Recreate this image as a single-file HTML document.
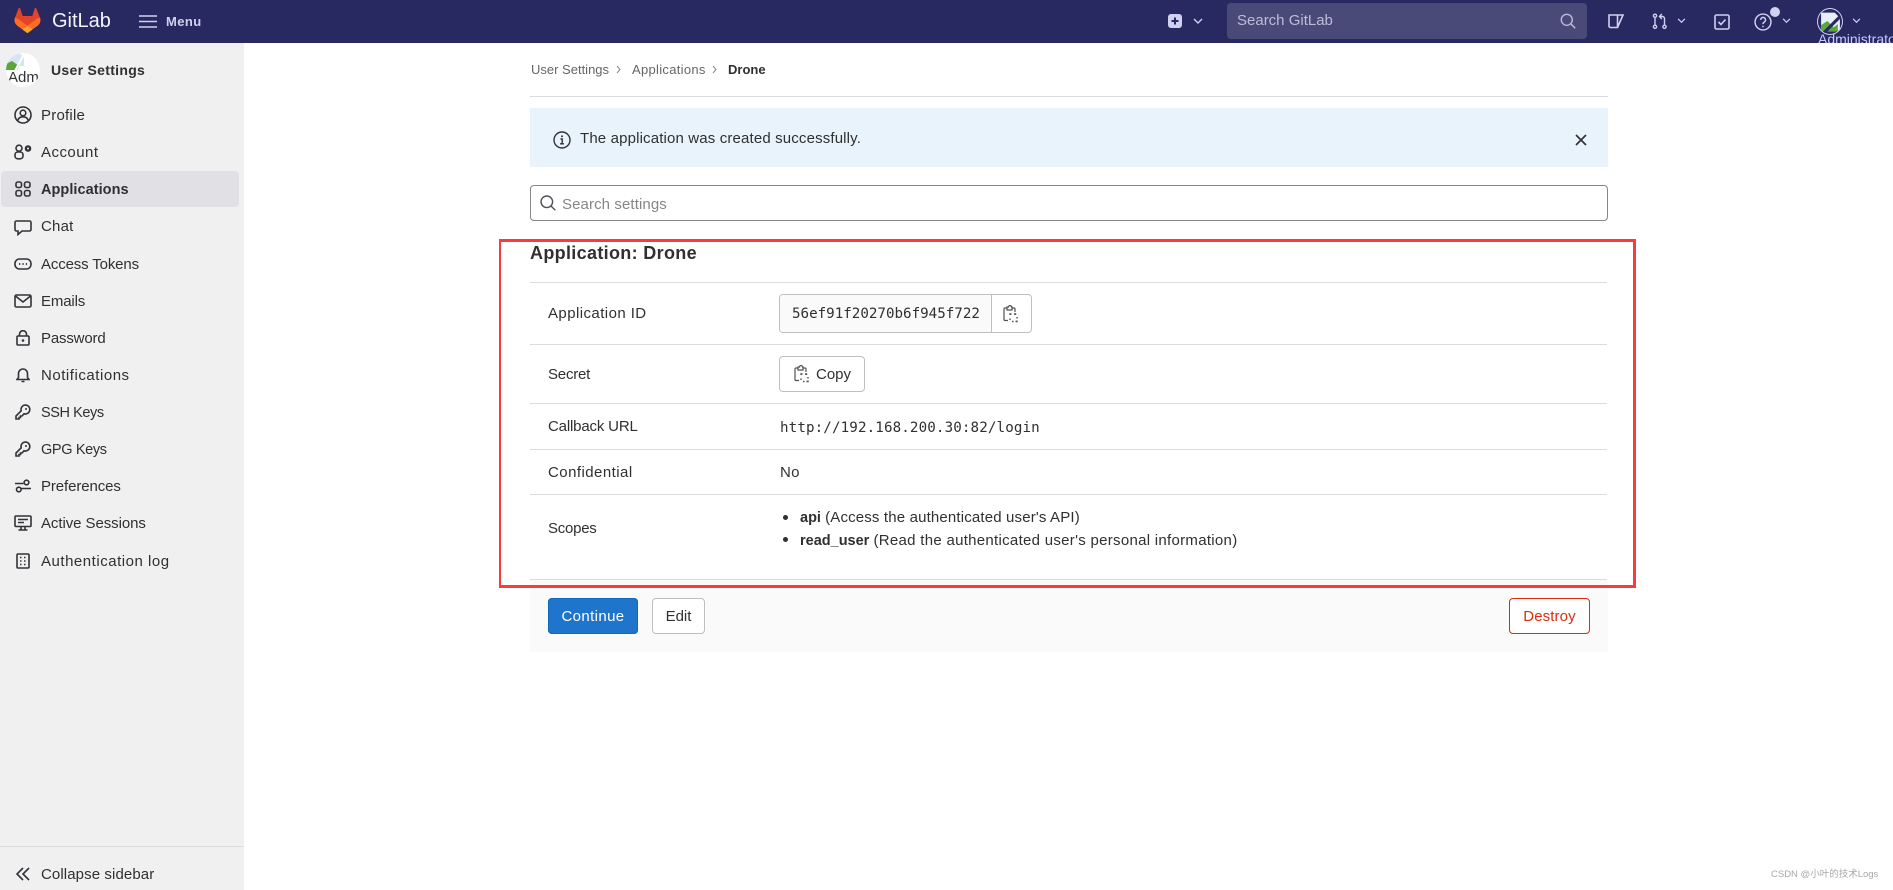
<!DOCTYPE html>
<html><head><meta charset="utf-8"><title>Drone</title>
<style>
html,body{margin:0;padding:0;width:1893px;height:890px;overflow:hidden;background:#fff}
body{font-family:"Liberation Sans","Noto Sans CJK SC",sans-serif;font-size:15px;color:#303030;position:relative}
.a{position:absolute}
.t{position:absolute;line-height:20px;white-space:nowrap}
svg{position:absolute;display:block;fill:none;stroke:currentColor;stroke-width:1.4}
.hdr{left:0;top:0;width:1893px;height:43px;background:#292961;overflow:hidden;color:#d1d0f0}
.side{left:0;top:43px;width:244px;height:847px;background:#f0f0f0}
.line{position:absolute;left:530px;width:1077px;height:1px;background:#dcdcde}
.m{font-family:"DejaVu Sans Mono","Liberation Mono",monospace;font-size:14.2px}
.ni{color:#333238;stroke-width:1.6}
.btn{position:absolute;box-sizing:border-box;border:1px solid #bfbfc3;border-radius:4px;background:#fff}
b{font-size:14.5px}
</style></head><body>

<div class="a hdr">
<svg style="left:14px;top:8px;stroke:none" width="27" height="25" viewBox="0 0 25 24"><path fill="#E24329" d="M24.507 9.5l-.034-.09L21.082.562a.896.896 0 00-1.694.091l-2.29 7.01H7.825L5.535.653a.898.898 0 00-1.694-.09L.451 9.411.416 9.5a6.297 6.297 0 002.09 7.278l.012.01.03.022 5.16 3.867 2.56 1.935 1.554 1.176a1.051 1.051 0 001.268 0l1.555-1.176 2.56-1.935 5.197-3.89.014-.01A6.297 6.297 0 0024.507 9.5z"/><path fill="#FC6D26" d="M24.507 9.5l-.034-.09a11.44 11.44 0 00-4.56 2.051l-7.447 5.632 4.742 3.584 5.197-3.89.014-.01A6.297 6.297 0 0024.507 9.5z"/><path fill="#FCA326" d="M7.707 20.677l2.56 1.935 1.555 1.176a1.051 1.051 0 001.268 0l1.555-1.176 2.56-1.935-4.743-3.584-4.755 3.584z"/><path fill="#FC6D26" d="M5.01 11.461a11.43 11.43 0 00-4.56-2.05L.416 9.5a6.297 6.297 0 002.09 7.278l.012.01.03.022 5.16 3.867 4.745-3.584-7.444-5.632z"/></svg>
<div class="t" style="left:52px;top:11px;font-size:20px;color:#f4f4ff">GitLab</div>
<svg style="left:139px;top:15px;stroke-width:1.5" width="18" height="13" viewBox="0 0 18 13"><path d="M0 1h18M0 6.500h18M0 12h18"/></svg>
<div class="t" style="left:166px;top:12px;font-size:13px;font-weight:700;letter-spacing:.4px;color:#d1d0f0">Menu</div>

<svg style="left:1168px;top:14px;stroke:none" width="14" height="14" viewBox="0 0 14 14"><rect width="14" height="14" rx="3" fill="#d1d0f0"/><path d="M6 3.500h2V6h2.500v2H8v2.500H6V8H3.500V6H6z" fill="#292961"/></svg>
<svg style="left:1193px;top:18px" width="10" height="7" viewBox="0 0 10 7"><path d="M1 1l4 4 4-4"/></svg>

<div class="a" style="left:1227px;top:3px;width:360px;height:36px;border-radius:4px;background:#4a4a78"></div>
<div class="t" style="left:1237px;top:11px;font-size:15px;color:#bcbcdc">Search GitLab</div>
<svg style="left:1560px;top:13px;color:#bcbcdc" width="16" height="16" viewBox="0 0 16 16"><circle cx="6.800" cy="6.800" r="5.500"/><path d="M11 11l4.200 4.200"/></svg>

<svg style="left:1608px;top:13px;stroke-width:1.6" width="16" height="16" viewBox="0 0 16 16"><path d="M1 2h8.500v12.500h-7A1.500 1.500 0 011 13zM9.500 2H15L9.500 14.500"/></svg>
<svg style="left:1652px;top:13px" width="16" height="17" viewBox="0 0 16 17"><circle cx="3" cy="2.800" r="1.600"/><circle cx="3" cy="13.800" r="1.600"/><circle cx="12.500" cy="13.800" r="1.600"/><path d="M3 5v6.500M12.500 11.500V5.500a2 2 0 00-2-2H8M9.800 1L7.500 3.500 9.800 6"/></svg>
<svg style="left:1677px;top:18px" width="9" height="6" viewBox="0 0 10 7"><path d="M1 1l4 4 4-4"/></svg>
<svg style="left:1714px;top:14px;stroke-width:1.6" width="16" height="16" viewBox="0 0 16 16"><rect x="1" y="1" width="14" height="14" rx="1.500"/><path d="M4.500 8l2.500 2.500 4.500-5"/></svg>
<svg style="left:1754px;top:13px" width="18" height="18" viewBox="0 0 17 17"><circle cx="8.500" cy="8.500" r="7.500"/><path d="M6.300 6.500a2.300 2.300 0 114 1.500c-.9.900-1.800 1.200-1.800 2.500M8.500 12v1.500"/></svg>
<div class="a" style="left:1770px;top:7px;width:10px;height:10px;border-radius:50%;background:#d1d0f0"></div>
<svg style="left:1782px;top:18px" width="9" height="6" viewBox="0 0 10 7"><path d="M1 1l4 4 4-4"/></svg>

<div class="a" style="left:1817px;top:8px;width:26px;height:27px;border-radius:50%;border:1px solid #d1d0f0;box-sizing:border-box;overflow:hidden;background:#292961">
<svg style="left:1px;top:1px;stroke:none" width="23" height="24" viewBox="0 0 22 22"><path d="M2 2h13l5 5v13H2z" fill="#e8eefc"/><path d="M2 20v-6l6-4 6 6 4-3v7z" fill="#59a83a"/><path d="M20 6L5 21" stroke="#292961" stroke-width="3"/></svg>
</div>
<svg style="left:1852px;top:18px" width="9" height="6" viewBox="0 0 10 7"><path d="M1 1l4 4 4-4"/></svg>
<div class="t" style="left:1818px;top:29px;font-size:14px;color:#c8c8ff">Administrator</div>
</div>

<div class="a side"></div>
<div class="a" style="left:6px;top:53px;width:34px;height:34px;border-radius:50%;background:#fff;overflow:hidden">
<svg style="left:0;top:0;stroke:none" width="20" height="18" viewBox="0 0 20 18"><path d="M0 6L13 0l5 4v9H0z" fill="#d6e4f5"/><path d="M0 17v-6l6-3 7 5-2 4z" fill="#5ba53c"/><path d="M17 3L9 18" stroke="#fff" stroke-width="2"/></svg>
<div class="t" style="left:2px;top:15px;font-size:15px;color:#333">Adm</div>
</div>
<div class="t" style="left:51px;top:60px;font-weight:700;font-size:14px;letter-spacing:.3px;color:#303030">User Settings</div>
<div class="a" style="left:1px;top:171px;width:238px;height:36px;background:#e1e1e5;border-radius:4px"></div>

<div class="t" style="left:41px;top:106px;letter-spacing:.23px">Profile</div>
<div class="t" style="left:41px;top:143px;letter-spacing:.47px">Account</div>
<div class="t" style="left:41px;top:180px;font-weight:700;font-size:14.5px;letter-spacing:.05px">Applications</div>
<div class="t" style="left:41px;top:217px;letter-spacing:.2px">Chat</div>
<div class="t" style="left:41px;top:255px;letter-spacing:-.14px">Access Tokens</div>
<div class="t" style="left:41px;top:292px;letter-spacing:-.15px">Emails</div>
<div class="t" style="left:41px;top:329px;letter-spacing:-.17px">Password</div>
<div class="t" style="left:41px;top:366px;letter-spacing:.53px">Notifications</div>
<div class="t" style="left:41px;top:403px;font-size:14.5px;letter-spacing:-.42px">SSH Keys</div>
<div class="t" style="left:41px;top:440px;font-size:14.5px;letter-spacing:-.35px">GPG Keys</div>
<div class="t" style="left:41px;top:477px;letter-spacing:-.1px">Preferences</div>
<div class="t" style="left:41px;top:514px;letter-spacing:-.07px">Active Sessions</div>
<div class="t" style="left:41px;top:552px;letter-spacing:.52px">Authentication log</div>

<svg class="ni" style="left:14px;top:106px" width="18" height="18" viewBox="0 0 18 18"><circle cx="9" cy="9" r="8"/><circle cx="9" cy="7" r="2.800"/><path d="M3.800 14.500c.6-2.600 2.600-3.700 5.200-3.700s4.600 1.100 5.200 3.700"/></svg>
<svg class="ni" style="left:14px;top:144px" width="18" height="16" viewBox="0 0 18 16"><circle cx="5" cy="4.200" r="3"/><rect x="1" y="8" width="8" height="6.800" rx="2.800"/><circle cx="14" cy="4.500" r="3.300" fill="#333238" stroke="none"/><circle cx="14" cy="4.500" r="1" fill="#f0f0f0" stroke="none"/></svg>
<svg class="ni" style="left:15px;top:181px" width="16" height="16" viewBox="0 0 16 16"><rect x="1" y="1" width="5.500" height="5.500" rx="1.800"/><rect x="9.500" y="1" width="5.500" height="5.500" rx="1.800"/><rect x="1" y="9.500" width="5.500" height="5.500" rx="1.800"/><rect x="9.500" y="9.500" width="5.500" height="5.500" rx="1.800"/></svg>
<svg class="ni" style="left:14px;top:220px" width="18" height="16" viewBox="0 0 18 16"><path d="M2.500 1h13A1.500 1.500 0 0117 2.500v7a1.500 1.500 0 01-1.500 1.500H8L4 14.500V11H2.500A1.500 1.500 0 011 9.500v-7A1.500 1.500 0 012.500 1z"/></svg>
<svg class="ni" style="left:14px;top:258px" width="18" height="12" viewBox="0 0 18 12"><rect x="1" y="1" width="16" height="10" rx="4.500"/><path d="M5 6h1.300M8.400 6h1.300M11.800 6h1.300" stroke-width="1.800"/></svg>
<svg class="ni" style="left:14px;top:294px" width="18" height="14" viewBox="0 0 18 14"><rect x="1" y="1" width="16" height="12" rx="1.500"/><path d="M1.500 2l7.500 6 7.500-6"/></svg>
<svg class="ni" style="left:16px;top:330px" width="14" height="16" viewBox="0 0 14 16"><rect x="1" y="6" width="12" height="9" rx="1"/><path d="M3.500 6V4.200a3.500 3.500 0 017 0V6"/><circle cx="7" cy="10.500" r="1.300" fill="currentColor" stroke="none"/></svg>
<svg class="ni" style="left:16px;top:367px" width="14" height="16" viewBox="0 0 14 16"><path d="M1 12.500h12l-1.500-2V6.500a4.500 4.500 0 00-9 0v4zM5.500 14.500h3"/></svg>
<svg class="ni" style="left:15px;top:404px" width="16" height="16" viewBox="0 0 16 16"><path d="M10.500 1a4.500 4.500 0 11-1.500 8.800L7 12H5.500v1.500H4V15H1v-3l5.200-5.200A4.500 4.500 0 0110.500 1z"/><circle cx="11" cy="5" r="1" fill="currentColor" stroke="none"/></svg>
<svg class="ni" style="left:15px;top:441px" width="16" height="16" viewBox="0 0 16 16"><path d="M10.500 1a4.500 4.500 0 11-1.500 8.800L7 12H5.500v1.500H4V15H1v-3l5.200-5.200A4.500 4.500 0 0110.500 1z"/><circle cx="11" cy="5" r="1" fill="currentColor" stroke="none"/></svg>
<svg class="ni" style="left:15px;top:479px" width="16" height="14" viewBox="0 0 16 14"><circle cx="11.500" cy="3.500" r="2.300"/><circle cx="3.800" cy="10.500" r="2.300"/><path d="M0 4.500h8.500M6.500 9.500H16"/></svg>
<svg class="ni" style="left:14px;top:515px" width="18" height="16" viewBox="0 0 18 16"><rect x="1" y="1" width="16" height="10.500" rx="1"/><path d="M4 4.500h10M4 7.500h6M7 12v2.500M11 12v2.500M4.500 15h9"/></svg>
<svg class="ni" style="left:16px;top:553px" width="14" height="16" viewBox="0 0 14 16"><rect x="1" y="1" width="12" height="14" rx="1"/><path d="M4 4.500h1.500M8 4.500h1.500M4 8h1.500M8 8h1.500M4 11.500h1.500M8 11.500h1.500"/></svg>

<div class="a" style="left:0;top:846px;width:244px;height:1px;background:#dcdcde"></div>
<svg class="ni" style="left:16px;top:867px" width="14" height="14" viewBox="0 0 14 14"><path d="M7 1L1 7l6 6M13 1L7 7l6 6"/></svg>
<div class="t" style="left:41px;top:865px;letter-spacing:.1px">Collapse sidebar</div>

<div class="t" style="left:531px;top:60px;font-size:13px;color:#666">User Settings</div>
<svg style="left:616px;top:65px;color:#888;stroke-width:1" width="5" height="9" viewBox="0 0 5 9"><path d="M1 1l3 3.500L1 8"/></svg>
<div class="t" style="left:632px;top:60px;font-size:13px;letter-spacing:.3px;color:#666">Applications</div>
<svg style="left:712px;top:65px;color:#888;stroke-width:1" width="5" height="9" viewBox="0 0 5 9"><path d="M1 1l3 3.500L1 8"/></svg>
<div class="t" style="left:728px;top:60px;font-size:13px;font-weight:700;color:#303030">Drone</div>
<div class="a" style="left:530px;top:96px;width:1078px;height:1px;background:#dcdcde"></div>

<div class="a" style="left:530px;top:108px;width:1078px;height:59px;background:#e9f3fc"></div>
<svg style="left:553px;top:131px;color:#333238" width="18" height="18" viewBox="0 0 18 18"><circle cx="9" cy="9" r="8"/><path d="M7.500 8h1.700v4.500M7 12.800h4" /><circle cx="9" cy="5.300" r="1" fill="currentColor" stroke="none"/></svg>
<div class="t" style="left:580px;top:129px;font-size:15px;letter-spacing:.15px">The application was created successfully.</div>
<svg style="left:1575px;top:134px;color:#333238;stroke-width:1.700" width="12" height="12" viewBox="0 0 12 12"><path d="M1 1l10 10M11 1L1 11"/></svg>

<div class="a" style="left:530px;top:185px;width:1078px;height:36px;box-sizing:border-box;border:1px solid #868686;border-radius:4px;background:#fff"></div>
<svg style="left:540px;top:195px;color:#535158" width="16" height="16" viewBox="0 0 16 16"><circle cx="6.800" cy="6.800" r="5.800"/><path d="M11 11l4.300 4.300"/></svg>
<div class="t" style="left:562px;top:195px;font-size:15px;letter-spacing:.1px;color:#868686">Search settings</div>

<div class="t" style="left:530px;top:243px;font-size:18px;font-weight:700;letter-spacing:.33px;color:#303030">Application: Drone</div>

<div class="line" style="top:282px"></div>
<div class="line" style="top:344px"></div>
<div class="line" style="top:403px"></div>
<div class="line" style="top:449px"></div>
<div class="line" style="top:494px"></div>
<div class="line" style="top:579px"></div>

<div class="t" style="left:548px;top:304px;letter-spacing:.43px">Application ID</div>
<div class="t" style="left:548px;top:365px;letter-spacing:-.2px">Secret</div>
<div class="t" style="left:548px;top:417px;letter-spacing:-.17px">Callback URL</div>
<div class="t" style="left:548px;top:463px;letter-spacing:.45px">Confidential</div>
<div class="t" style="left:548px;top:519px;letter-spacing:-.25px">Scopes</div>

<div class="a" style="left:779px;top:294px;width:253px;height:39px;box-sizing:border-box;border:1px solid #bfbfc3;border-radius:4px;background:#fff;overflow:hidden"><div class="a" style="left:0;top:0;width:211px;height:37px;background:#fafafa;border-right:1px solid #bfbfc3"></div></div>
<div class="t m" style="left:792px;top:304px;width:189px;overflow:hidden">56ef91f20270b6f945f722</div>
<svg style="left:1003px;top:305px;color:#535158;stroke-width:1.200" width="15" height="18" viewBox="0 0 15 18"><path d="M4 3H2a1 1 0 00-1 1v10.500a1 1 0 001 1h3M9 3h2a1 1 0 011 1v3M4 2h1.500a1 1 0 013 0H9v3H4z"/><path d="M7 10V9h1.500M11 9h1.500v1M14 12v1.500M14 15.500v1h-1.500M10.500 16.500H9M7 15v-1.500" stroke-width="1.400"/></svg>

<div class="btn" style="left:779px;top:356px;width:86px;height:36px"></div>
<svg style="left:794px;top:365px;color:#535158;stroke-width:1.200" width="15" height="18" viewBox="0 0 15 18"><path d="M4 3H2a1 1 0 00-1 1v10.500a1 1 0 001 1h3M9 3h2a1 1 0 011 1v3M4 2h1.500a1 1 0 013 0H9v3H4z"/><path d="M7 10V9h1.500M11 9h1.500v1M14 12v1.500M14 15.500v1h-1.500M10.500 16.500H9M7 15v-1.500" stroke-width="1.400"/></svg>
<div class="t" style="left:816px;top:365px">Copy</div>

<div class="t m" style="left:780px;top:418px;letter-spacing:.12px">http://192.168.200.30:82/login</div>
<div class="t" style="left:780px;top:463px;letter-spacing:.3px">No</div>

<div class="a" style="left:783px;top:515px;width:5px;height:5px;border-radius:50%;background:#303030"></div>
<div class="a" style="left:783px;top:537px;width:5px;height:5px;border-radius:50%;background:#303030"></div>
<div class="t" style="left:800px;top:508px"><b>api</b> <span style="letter-spacing:.16px">(Access the authenticated user's API)</span></div>
<div class="t" style="left:800px;top:531px"><b>read_user</b> <span style="letter-spacing:.29px">(Read the authenticated user's personal information)</span></div>

<div class="a" style="left:530px;top:580px;width:1078px;height:72px;background:#fafafa"></div>
<div class="a" style="left:548px;top:598px;width:90px;height:36px;background:#1f75cb;border-radius:4px;box-shadow:inset 0 0 0 1px #1068bf"></div>
<div class="t" style="left:548px;top:607px;width:90px;text-align:center;color:#fff;letter-spacing:.37px">Continue</div>
<div class="btn" style="left:652px;top:598px;width:53px;height:36px"></div>
<div class="t" style="left:652px;top:607px;width:53px;text-align:center">Edit</div>
<div class="btn" style="left:1509px;top:598px;width:81px;height:36px;border-color:#dd2b0e"></div>
<div class="t" style="left:1509px;top:607px;width:81px;text-align:center;color:#dd2b0e;letter-spacing:.1px">Destroy</div>

<div class="a" style="left:499px;top:239px;width:1137px;height:349px;box-sizing:border-box;border:3px solid #fb3a3c;border-left-width:2px"></div>

<div class="t" style="left:1771px;top:865px;font-size:9.5px;color:#a8a8a8">CSDN @小叶的技术Logs</div>
</body></html>
